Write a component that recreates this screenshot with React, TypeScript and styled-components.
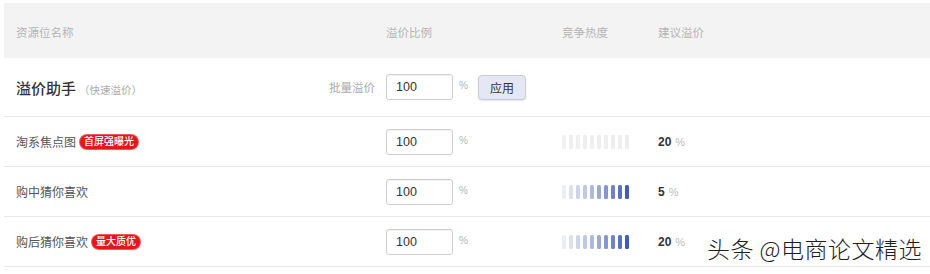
import React from "react";
import styled, { createGlobalStyle } from "styled-components";

const Global = createGlobalStyle`
  html, body { margin: 0; padding: 0; background: #fff; }
  body { font-family: "Liberation Sans", "Noto Sans CJK SC", sans-serif; }
  * { box-sizing: border-box; }
`;

const Page = styled.div`
  position: relative;
  width: 930px;
  height: 274px;
  padding: 3px 0 0 4px;
  overflow: hidden;
`;

const cols = `382px 176px 96px 1fr`;

const HeaderRow = styled.div`
  display: grid;
  grid-template-columns: ${cols};
  height: 55px;
  align-items: center;
  background: #f3f3f3;
  color: #b4b4b4;
  font-size: 11.5px;
`;

const HeadCell = styled.div<{ $pad?: number }>`
  padding-left: ${(p) => p.$pad ?? 0}px;
  padding-top: 2px;
`;

const Row = styled.div<{ $h: number }>`
  display: grid;
  grid-template-columns: ${cols};
  height: ${(p) => p.$h}px;
  align-items: center;
  border-bottom: 1px solid #e9e9e9;
`;

const NameCell = styled.div`
  display: flex;
  align-items: center;
  padding-left: 12px;
  font-size: 12px;
  color: #555;
`;

const AssistCell = styled.div`
  display: flex;
  align-items: center;
  justify-content: space-between;
  padding: 0 11px 0 12px;
`;

const AssistTitle = styled.span`
  font-size: 15px;
  font-weight: 500;
  color: #333;
`;

const AssistSub = styled.span`
  font-size: 10.5px;
  color: #aaa;
  margin-left: 3px;
`;

const BatchLabel = styled.span`
  font-size: 11.5px;
  color: #aaa;
`;

const Badge = styled.span`
  display: inline-flex;
  align-items: center;
  height: 14px;
  padding: 0 4px;
  margin-left: 4px;
  border-radius: 7px;
  background: #e3161c;
  color: #fff;
  font-size: 10px;
  line-height: 14px;
  font-weight: 500;
  box-shadow: 0 0 0 1px #f05a5e;
`;

const RatioCell = styled.div`
  display: flex;
  align-items: center;
`;

const Input = styled.div`
  width: 67px;
  height: 26px;
  border: 1px solid #cfcfcf;
  border-radius: 3px;
  box-shadow: inset 0 1px 1px rgba(0, 0, 0, 0.06);
  display: flex;
  align-items: center;
  padding-left: 9px;
  font-size: 12.5px;
  color: #333;
  background: #fff;
`;

const Pct = styled.span`
  margin-left: 6px;
  font-size: 10px;
  color: #b5b5b5;
  margin-top: -3px;
`;

const ApplyBtn = styled.div`
  margin-left: 10px;
  width: 48px;
  height: 25px;
  display: flex;
  align-items: center;
  justify-content: center;
  background: #e5e8f4;
  border: 1px solid #c9ccd8;
  border-radius: 4px;
  box-shadow: 0 1px 2px rgba(0, 0, 0, 0.1);
  font-size: 12px;
  color: #333;
`;

const Bars = styled.div`
  display: flex;
  gap: 3px;
  align-items: center;
`;

const Bar = styled.span<{ $c: string }>`
  display: block;
  width: 4px;
  height: 14px;
  border-radius: 1.5px;
  background: ${(p) => p.$c};
`;

const Suggest = styled.div`
  display: flex;
  align-items: baseline;
  font-size: 12px;
  font-weight: 700;
  color: #333;
`;

const SuggestPct = styled.span`
  margin-left: 4px;
  font-size: 11px;
  font-weight: 400;
  color: #bbb;
`;

const Watermark = styled.div`
  position: absolute;
  right: 8px;
  top: 235px;
  font-family: "Noto Sans CJK SC", sans-serif;
  font-size: 23px;
  font-weight: 300;
  line-height: 26px;
  color: #1e1e1e;
  letter-spacing: 0.5px;
  text-shadow: 0 0 2px #fff, 0 0 2px #fff, 1px 1px 0 #fff, -1px -1px 0 #fff;
`;

const greyBars = ["#f1f1f1", "#efefef", "#f0f0f0", "#eeeeee", "#efefef", "#eeeeee", "#efefef", "#eeeeee", "#efefef", "#eeeeee"];
const blueBars = ["#eceef5", "#dde1ee", "#ced4ea", "#bfc8e4", "#aeb9de", "#9aa9d6", "#8697ce", "#6f83c5", "#5872bd", "#3f5db5"];

type RowData = { name: string; badge?: string; bars: string[]; value: string };

const rows: RowData[] = [
  { name: "淘系焦点图", badge: "首屏强曝光", bars: greyBars, value: "20" },
  { name: "购中猜你喜欢", bars: blueBars, value: "5" },
  { name: "购后猜你喜欢", badge: "量大质优", bars: blueBars, value: "20" },
];

export default function App() {
  return (
    <>
      <Global />
      <Page>
        <HeaderRow>
          <HeadCell $pad={12}>资源位名称</HeadCell>
          <HeadCell>溢价比例</HeadCell>
          <HeadCell>竞争热度</HeadCell>
          <HeadCell>建议溢价</HeadCell>
        </HeaderRow>
        <Row $h={59}>
          <AssistCell>
            <span>
              <AssistTitle>溢价助手</AssistTitle>
              <AssistSub>（快速溢价）</AssistSub>
            </span>
            <BatchLabel>批量溢价</BatchLabel>
          </AssistCell>
          <RatioCell>
            <Input>100</Input>
            <Pct>%</Pct>
            <ApplyBtn>应用</ApplyBtn>
          </RatioCell>
          <div />
          <div />
        </Row>
        {rows.map((r) => (
          <Row $h={50} key={r.name}>
            <NameCell>
              {r.name}
              {r.badge && <Badge>{r.badge}</Badge>}
            </NameCell>
            <RatioCell>
              <Input>100</Input>
              <Pct>%</Pct>
            </RatioCell>
            <Bars>
              {r.bars.map((c, i) => (
                <Bar key={i} $c={c} />
              ))}
            </Bars>
            <Suggest>
              {r.value}
              <SuggestPct>%</SuggestPct>
            </Suggest>
          </Row>
        ))}
        <Watermark>头条 @电商论文精选</Watermark>
      </Page>
    </>
  );
}
